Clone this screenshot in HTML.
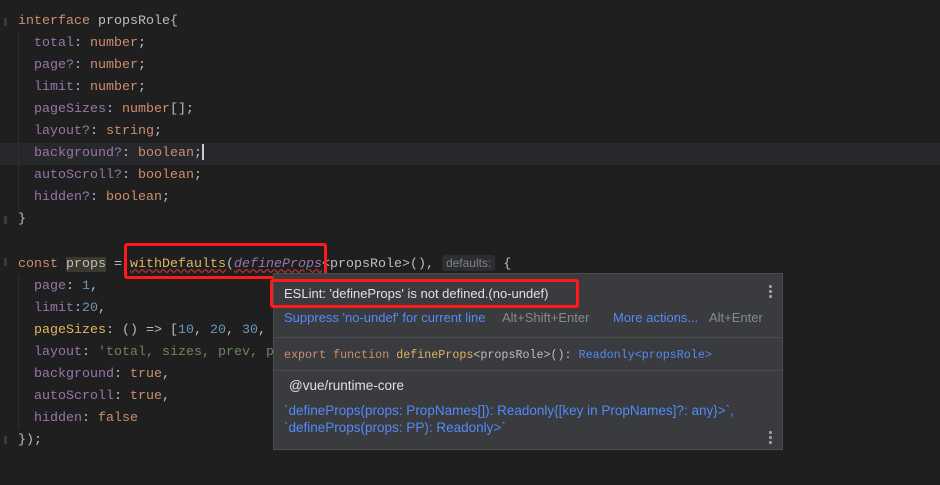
<!DOCTYPE html>
<html><head><meta charset="utf-8"><style>
body{margin:0;width:940px;height:485px;background:#1f1f1f;overflow:hidden;position:relative;font-family:"Liberation Mono",monospace;font-size:13.33px}
.l{position:absolute;left:0;height:22px;line-height:22px;white-space:pre;color:#bcbec4}
.k{color:#cf8e6d}.p{color:#9876aa}.n{color:#6897bb}.s{color:#6a8759}.f{color:#e0b563}.t{color:#cf8e6d}
.i{font-style:italic;color:#9876aa}
.fold{position:absolute;left:4px;width:3px;height:8px;background:#3a3a3a}
.guide{position:absolute;left:18px;width:1px;background:#2e2e2e}
.box{position:absolute;border:3px solid #ff1a1a;border-radius:3px;box-sizing:border-box}
.pop{position:absolute;left:273px;top:273px;width:510px;height:177px;background:#393b3e;border:1px solid #4a4c50;box-sizing:border-box;font-family:"Liberation Sans",sans-serif;font-size:13px}
.pl{position:absolute;white-space:pre}
.dots{position:absolute;width:3px}
.dots i{display:block;width:3px;height:3px;background:#9a9da3;margin-bottom:2px;border-radius:1px}
</style></head><body>
<div class="l" style="top:143px;width:940px;background:#26282b"></div>
<div class="fold" style="top:18px"></div><div class="fold" style="top:216px"></div>
<div class="fold" style="top:258px"></div><div class="fold" style="top:436px"></div>
<div class="guide" style="top:33px;height:176px"></div>
<div class="guide" style="top:275px;height:154px"></div>
<div class="l" style="top:11px;left:18px"><span class="k">interface</span> propsRole{</div>
<div class="l" style="top:33px;left:34px"><span class="p">total</span>: <span class="t">number</span>;</div>
<div class="l" style="top:55px;left:34px"><span class="p">page?</span>: <span class="t">number</span>;</div>
<div class="l" style="top:77px;left:34px"><span class="p">limit</span>: <span class="t">number</span>;</div>
<div class="l" style="top:99px;left:34px"><span class="p">pageSizes</span>: <span class="t">number</span>[];</div>
<div class="l" style="top:121px;left:34px"><span class="p">layout?</span>: <span class="t">string</span>;</div>
<div class="l" style="top:143px;left:34px"><span class="p">background?</span>: <span class="t">boolean</span>;<span style="display:inline-block;width:2px;height:16px;background:#ccc;vertical-align:middle"></span></div>
<div class="l" style="top:165px;left:34px"><span class="p">autoScroll?</span>: <span class="t">boolean</span>;</div>
<div class="l" style="top:187px;left:34px"><span class="p">hidden?</span>: <span class="t">boolean</span>;</div>
<div class="l" style="top:209px;left:18px">}</div>
<div class="l" style="top:252px;left:18px"><span class="k">const</span> <span style="background:#3b3a2c">props</span> = <span class="f" style="text-decoration:underline wavy #a33;">withDefaults</span>(<span class="i" style="text-decoration:underline wavy #a33">defineProps</span>&lt;propsRole&gt;(), <span style="font-family:'Liberation Sans',sans-serif;font-size:12px;color:#808386;background:#2b2d30;border-radius:3px;padding:1px 4px">defaults:</span> {</div>
<div class="l" style="top:276px;left:34px"><span class="p">page</span>: <span class="n">1</span>,</div>
<div class="l" style="top:298px;left:34px"><span class="p">limit</span>:<span class="n">20</span>,</div>
<div class="l" style="top:320px;left:34px"><span class="f">pageSizes</span>: () =&gt; [<span class="n">10</span>, <span class="n">20</span>, <span class="n">30</span>,</div>
<div class="l" style="top:342px;left:34px"><span class="p">layout</span>: <span class="s">'total, sizes, prev, p</span></div>
<div class="l" style="top:364px;left:34px"><span class="p">background</span>: <span class="k">true</span>,</div>
<div class="l" style="top:386px;left:34px"><span class="p">autoScroll</span>: <span class="k">true</span>,</div>
<div class="l" style="top:408px;left:34px"><span class="p">hidden</span>: <span class="k">false</span></div>
<div class="l" style="top:430px;left:18px">});</div>
<div class="box" style="left:124px;top:243px;width:203px;height:36px"></div>
<div class="pop">
 <div class="pl" style="left:10px;top:12px;color:#dfe1e5">ESLint: 'defineProps' is not defined.(no-undef)</div>
 <div class="dots" style="left:495px;top:11px"><i></i><i></i><i></i></div>
 <div class="pl" style="left:10px;top:36px;color:#548af7">Suppress 'no-undef' for current line</div>
 <div class="pl" style="left:228px;top:36px;color:#868a91">Alt+Shift+Enter</div>
 <div class="pl" style="left:339px;top:36px;color:#548af7">More actions...</div>
 <div class="pl" style="left:435px;top:36px;color:#868a91">Alt+Enter</div>
 <div style="position:absolute;left:0;right:0;top:63px;height:1px;background:#4a4c50"></div>
 <div class="pl" style="left:10px;top:74px;font-family:'Liberation Mono',monospace;font-size:11.7px"><span style="color:#cf8e6d">export function </span><span style="color:#e0b563">defineProps</span><span style="color:#bcbec4">&lt;propsRole&gt;(): </span><span style="color:#548af7">Readonly&lt;propsRole&gt;</span></div>
 <div style="position:absolute;left:0;right:0;top:96px;height:1px;background:#4a4c50"></div>
 <div class="pl" style="left:15px;top:104px;color:#dfe1e5;font-size:13.5px">@vue/runtime-core</div>
 <div class="pl" style="left:10px;top:129px;color:#548af7;font-size:13.5px">`defineProps(props: PropNames[]): Readonly{[key in PropNames]?: any}&gt;`,</div>
 <div class="pl" style="left:10px;top:146px;color:#548af7;font-size:13.5px">`defineProps(props: PP): Readonly&gt;`</div>
 <div class="dots" style="left:495px;top:157px"><i></i><i></i><i></i></div>
</div>
<div class="box" style="left:270px;top:279px;width:309px;height:29px"></div>
</body></html>
